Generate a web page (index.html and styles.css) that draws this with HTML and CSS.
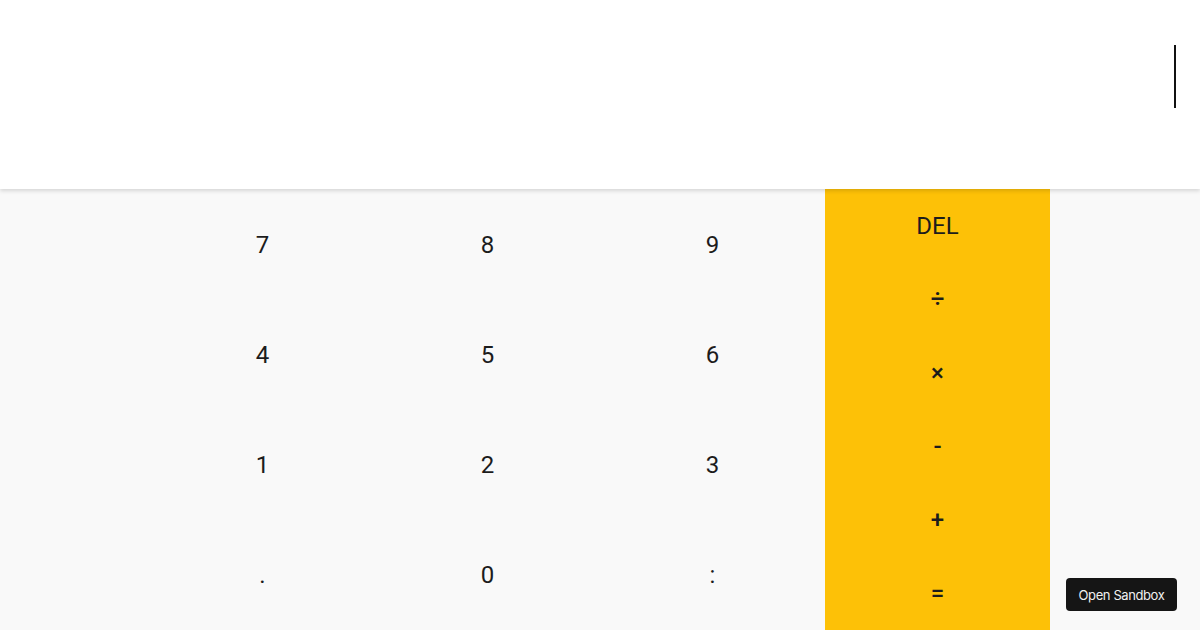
FILE: index.html
```html
<!DOCTYPE html>
<html lang="en">
<head>
<meta charset="utf-8">
<title>Calculator</title>
<link rel="stylesheet" href="styles.css">
</head>
<body>
<div class="app">
  <header class="display">
    <div class="caret"></div>
  </header>
  <main class="keypad">
    <div class="numbers">
      <button class="key">7</button>
      <button class="key">8</button>
      <button class="key">9</button>
      <button class="key">4</button>
      <button class="key">5</button>
      <button class="key">6</button>
      <button class="key">1</button>
      <button class="key">2</button>
      <button class="key">3</button>
      <button class="key">.</button>
      <button class="key">0</button>
      <button class="key">:</button>
    </div>
    <div class="operators">
      <button class="op del">DEL</button>
      <button class="op">÷</button>
      <button class="op">×</button>
      <button class="op">-</button>
      <button class="op">+</button>
      <button class="op">=</button>
    </div>
  </main>
</div>
<a class="sandbox-btn">Open Sandbox</a>
</body>
</html>
```
FILE: styles.css
```css
* { box-sizing: border-box; }
html, body {
  margin: 0;
  padding: 0;
  height: 100%;
  overflow: hidden;
  font-family: Roboto, "Liberation Sans", sans-serif;
  background: #f9f9f9;
}
.app {
  display: flex;
  flex-direction: column;
  height: 630px;
}
.display {
  position: relative;
  z-index: 2;
  height: 189px;
  flex: 0 0 189px;
  background: #fff;
  box-shadow: 0 2px 4px rgba(0, 0, 0, 0.14);
  display: flex;
  justify-content: flex-end;
  align-items: flex-start;
  padding: 45px 24px 0 0;
}
.caret {
  width: 2px;
  height: 63px;
  background: #111;
}
.keypad {
  flex: 1;
  width: 900px;
  margin: 0 auto;
  display: grid;
  grid-template-columns: 675px 225px;
}
.numbers {
  display: grid;
  grid-template-columns: repeat(3, 225px);
  grid-template-rows: repeat(4, 110px);
}
.key, .op {
  border: 0;
  background: transparent;
  font-family: Roboto, "Liberation Sans", sans-serif;
  font-size: 24px;
  font-weight: 400;
  color: #1c1c1c;
  padding: 1px 0 0;
  margin: 0;
  display: flex;
  align-items: center;
  justify-content: center;
}
.operators {
  background: #fdc107;
  display: grid;
  grid-template-rows: repeat(6, 1fr);
}
.op {
  padding: 0;
  font-weight: 500;
}
.op.del {
  font-weight: 400;
}
.sandbox-btn {
  position: fixed;
  right: 23px;
  bottom: 19px;
  width: 111px;
  height: 33px;
  border-radius: 4px;
  background: #151515;
  color: #f0f0f0;
  font-family: Inter, "Liberation Sans", sans-serif;
  font-size: 13px;
  display: flex;
  align-items: center;
  justify-content: center;
  letter-spacing: -0.4px;
}
```
